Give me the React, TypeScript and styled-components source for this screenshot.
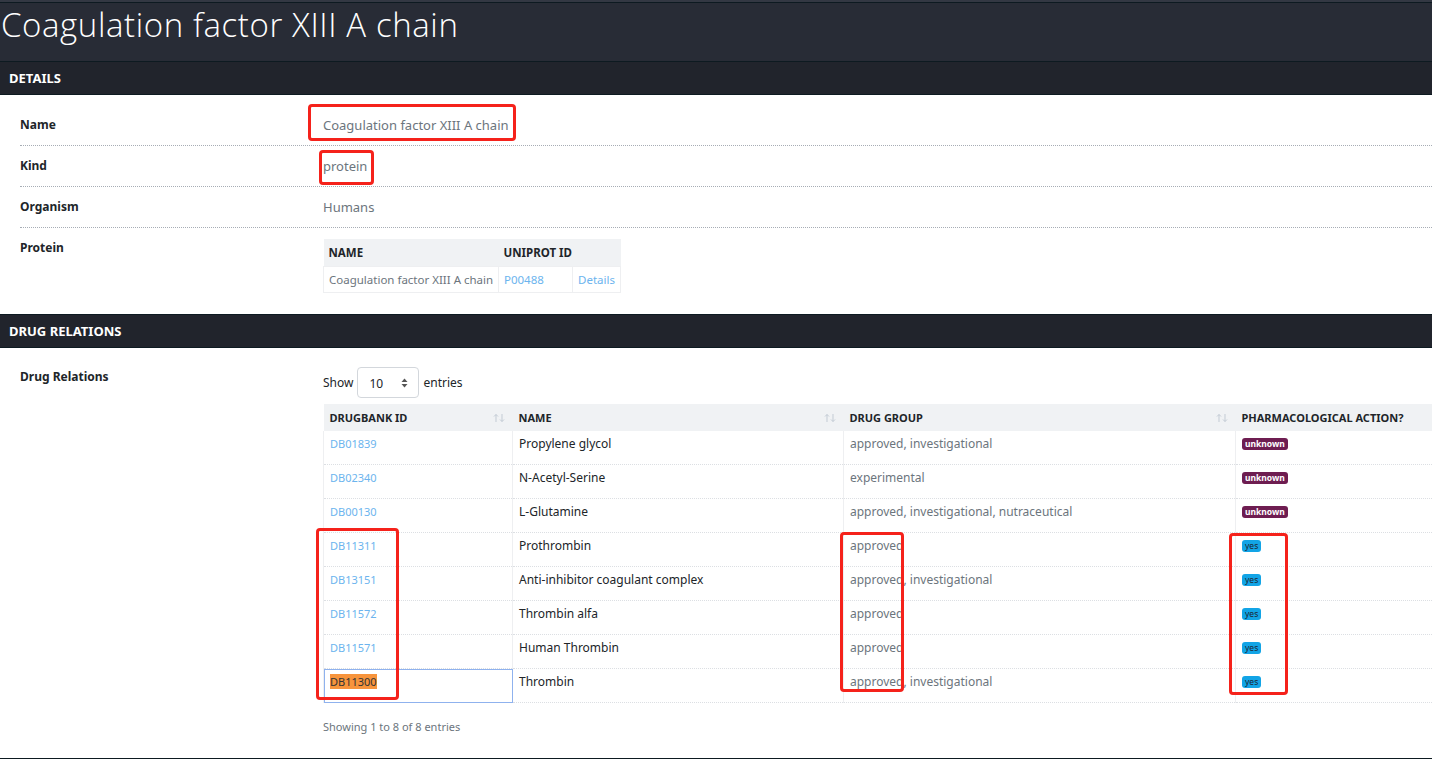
import styled, { createGlobalStyle } from "styled-components";

const GlobalStyle = createGlobalStyle`
  html, body {
    margin: 0;
    padding: 0;
    background: #fff;
  }
  body {
    font-family: "Noto Sans", "Open Sans", sans-serif;
    font-size: 12px;
    color: #212529;
  }
`;

type Drug = {
  id: string;
  name: string;
  group: string;
  action: "unknown" | "yes";
};

const drugs: Drug[] = [
  { id: "DB01839", name: "Propylene glycol", group: "approved, investigational", action: "unknown" },
  { id: "DB02340", name: "N-Acetyl-Serine", group: "experimental", action: "unknown" },
  { id: "DB00130", name: "L-Glutamine", group: "approved, investigational, nutraceutical", action: "unknown" },
  { id: "DB11311", name: "Prothrombin", group: "approved", action: "yes" },
  { id: "DB13151", name: "Anti-inhibitor coagulant complex", group: "approved, investigational", action: "yes" },
  { id: "DB11572", name: "Thrombin alfa", group: "approved", action: "yes" },
  { id: "DB11571", name: "Human Thrombin", group: "approved", action: "yes" },
  { id: "DB11300", name: "Thrombin", group: "approved, investigational", action: "yes" },
];

// red markup boxes drawn over the screenshot
const marks = [
  { left: 308, top: 104, width: 208, height: 37 },
  { left: 319, top: 150, width: 55, height: 35 },
  { left: 316, top: 528, width: 83, height: 172 },
  { left: 840, top: 532, width: 64, height: 160 },
  { left: 1229, top: 533, width: 59, height: 162 },
];

const SortIcon = () => (
  <svg width="12" height="10" viewBox="0 0 12 10">
    <path d="M3 9V1.5M1 3.5L3 1.5L5 3.5" stroke="#c3cbd4" strokeWidth="1" fill="none" />
    <path d="M9 1v7.5M7 6.5L9 8.5L11 6.5" stroke="#c3cbd4" strokeWidth="1" fill="none" />
  </svg>
);

const App = () => {
  return (
    <Page>
      <GlobalStyle />
      <TitleBand>
        <Title>Coagulation factor XIII A chain</Title>
      </TitleBand>

      <SectionBar>DETAILS</SectionBar>
      <SectionBody $top={10} $bottom={11}>
        <DetailRow>
          <Label>Name</Label>
          <Value>Coagulation factor XIII A chain</Value>
        </DetailRow>
        <DetailRow>
          <Label>Kind</Label>
          <Value>protein</Value>
        </DetailRow>
        <DetailRow>
          <Label>Organism</Label>
          <Value>Humans</Value>
        </DetailRow>
        <DetailRow $last>
          <Label>Protein</Label>
          <div>
            <SmallTable>
              <thead>
                <tr>
                  <SmallHead style={{ width: 175 }}>NAME</SmallHead>
                  <SmallHead style={{ width: 74 }}>UNIPROT ID</SmallHead>
                  <SmallHead style={{ width: 48 }}></SmallHead>
                </tr>
              </thead>
              <tbody>
                <tr>
                  <SmallCell>Coagulation factor XIII A chain</SmallCell>
                  <SmallCell $link>P00488</SmallCell>
                  <SmallCell $link>Details</SmallCell>
                </tr>
              </tbody>
            </SmallTable>
          </div>
        </DetailRow>
      </SectionBody>

      <SectionBar>DRUG RELATIONS</SectionBar>
      <SectionBody $top={0} $bottom={0}>
        <DetailRow $last $tall>
          <Label>Drug Relations</Label>
          <div>
            <LengthBar>
              Show
              <FakeSelect>
                <span>10</span>
                <svg width="7" height="10" viewBox="0 0 7 10">
                  <path d="M3.5 0.5L6.5 4H0.5Z" fill="#555" />
                  <path d="M3.5 9.5L6.5 6H0.5Z" fill="#555" />
                </svg>
              </FakeSelect>
              entries
            </LengthBar>
            <DataTable>
              <thead>
                <tr>
                  <HeadCell style={{ width: 189 }}>
                    DRUGBANK ID
                    <SortIcon />
                  </HeadCell>
                  <HeadCell style={{ width: 331 }}>
                    NAME
                    <SortIcon />
                  </HeadCell>
                  <HeadCell style={{ width: 392 }}>
                    DRUG GROUP
                    <SortIcon />
                  </HeadCell>
                  <HeadCell>PHARMACOLOGICAL ACTION?</HeadCell>
                </tr>
              </thead>
              <tbody>
                {drugs.map((d, i) => {
                  const focused = i === drugs.length - 1;
                  return (
                    <tr key={d.id}>
                      <BodyCell $focused={focused}>
                        {focused ? <Picked>{d.id}</Picked> : <IdLink>{d.id}</IdLink>}
                      </BodyCell>
                      <BodyCell $tone="dark">{d.name}</BodyCell>
                      <BodyCell $tone="muted">{d.group}</BodyCell>
                      <BodyCell>
                        <Badge $kind={d.action}>{d.action}</Badge>
                      </BodyCell>
                    </tr>
                  );
                })}
              </tbody>
            </DataTable>
            <InfoLine>Showing 1 to 8 of 8 entries</InfoLine>
          </div>
        </DetailRow>
      </SectionBody>
      <Footer />

      {marks.map((m, i) => (
        <Mark
          key={i}
          style={{ left: m.left, top: m.top, width: m.width, height: m.height }}
        />
      ))}
    </Page>
  );
};

const Page = styled.div`
  position: relative;
  width: 100%;
  min-height: 759px;
  overflow: hidden;
`;

const TitleBand = styled.div`
  background: #282c36;
  border-top: 2px solid #333843;
  height: 59px;
  box-shadow: inset 0 1px 0 #0d1a21;
`;

const Title = styled.h1`
  margin: 0;
  padding: 3px 0 0 1px;
  font-family: "Open Sans", "Noto Sans", sans-serif;
  font-weight: 300;
  font-size: 33px;
  letter-spacing: 0.6px;
  line-height: 40px;
  color: #ffffff;
`;

const SectionBar = styled.div`
  background: #21242c;
  border-top: 1px solid #0d1a21;
  border-bottom: 1px solid #0d1a21;
  height: 32px;
  line-height: 32px;
  padding-left: 9px;
  color: #ffffff;
  font-weight: 700;
  font-size: 13px;
`;

const SectionBody = styled.div<{ $top: number; $bottom: number }>`
  padding: ${(p) => p.$top}px 0 ${(p) => p.$bottom}px 20px;
`;

const DetailRow = styled.div<{ $last?: boolean; $tall?: boolean }>`
  display: grid;
  grid-template-columns: 303px 1fr;
  padding: ${(p) => (p.$tall ? "19px 0 21px" : "10px 0 10px")};
  border-bottom: ${(p) => (p.$last ? "none" : "1px dotted #a7adb5")};
`;

const Label = styled.div`
  font-weight: 700;
  line-height: 20px;
  color: #212529;
`;

const Value = styled.div`
  line-height: 20px;
  font-size: 13px;
  color: #6c757d;
`;

const SmallTable = styled.table`
  width: 297px;
  border-collapse: collapse;
  table-layout: fixed;
  font-size: 11.5px;
  margin-top: 1px;
`;

const SmallHead = styled.th`
  background: #f0f2f4;
  text-align: left;
  font-weight: 700;
  color: #212529;
  height: 27px;
  padding: 0 5px;
  box-sizing: border-box;
  white-space: nowrap;
`;

const SmallCell = styled.td<{ $link?: boolean }>`
  height: 26px;
  padding: 0 5px;
  box-sizing: border-box;
  border: 1px solid #eeeff1;
  color: ${(p) => (p.$link ? "#6cb4ee" : "#6c757d")};
  white-space: nowrap;
  overflow: hidden;
`;

const LengthBar = styled.div`
  display: flex;
  align-items: center;
  gap: 4px;
  height: 31px;
  margin-bottom: 6px;
  color: #212529;
`;

const FakeSelect = styled.div`
  display: flex;
  align-items: center;
  justify-content: space-between;
  width: 62px;
  height: 31px;
  box-sizing: border-box;
  border: 1px solid #d3d7dc;
  border-radius: 4px;
  padding: 2px 10px 0 11px;
  background: #fff;
`;

const DataTable = styled.table`
  width: 100%;
  border-collapse: collapse;
  table-layout: fixed;
`;

const HeadCell = styled.th`
  position: relative;
  background: #f0f2f4;
  text-align: left;
  font-size: 11px;
  font-weight: 700;
  color: #212529;
  height: 27px;
  padding: 0 6px;
  box-sizing: border-box;
  white-space: nowrap;

  svg {
    position: absolute;
    right: 8px;
    top: 9px;
  }
`;

const BodyCell = styled.td<{ $tone?: "dark" | "muted"; $focused?: boolean }>`
  height: 34px;
  padding: 6px 6px 0;
  vertical-align: top;
  line-height: 14px;
  box-sizing: border-box;
  border-left: 1px solid #eeeff1;
  border-bottom: 1px dotted #dcdfe3;
  color: ${(p) => (p.$tone === "muted" ? "#6c757d" : "#212529")};
  white-space: nowrap;
  outline: ${(p) => (p.$focused ? "1px solid #8fb2ee" : "none")};
  outline-offset: -1px;
`;

const IdLink = styled.span`
  font-size: 11px;
  color: #6cb4ee;
`;

const Picked = styled.span`
  font-size: 11px;
  background: #f7943c;
  color: #333;
`;

const Badge = styled.span<{ $kind: "unknown" | "yes" }>`
  display: inline-block;
  margin-top: 1px;
  font-size: 8.5px;
  line-height: 12px;
  padding: 0 3px;
  border-radius: 3px;
  font-weight: ${(p) => (p.$kind === "unknown" ? 700 : 400)};
  background: ${(p) => (p.$kind === "unknown" ? "#6e1d51" : "#12a4e6")};
  color: ${(p) => (p.$kind === "unknown" ? "#ffffff" : "#1b2431")};
  vertical-align: top;
`;

const InfoLine = styled.div`
  margin-top: 14px;
  line-height: 20px;
  font-size: 11px;
  color: #6c757d;
`;

const Footer = styled.div`
  height: 20px;
  background: #23272f;
  border-top: 1px solid #0d1a21;
`;

const Mark = styled.div`
  position: absolute;
  box-sizing: border-box;
  border: 3px solid #f5221b;
  border-radius: 4px;
  pointer-events: none;
`;

export default App;
